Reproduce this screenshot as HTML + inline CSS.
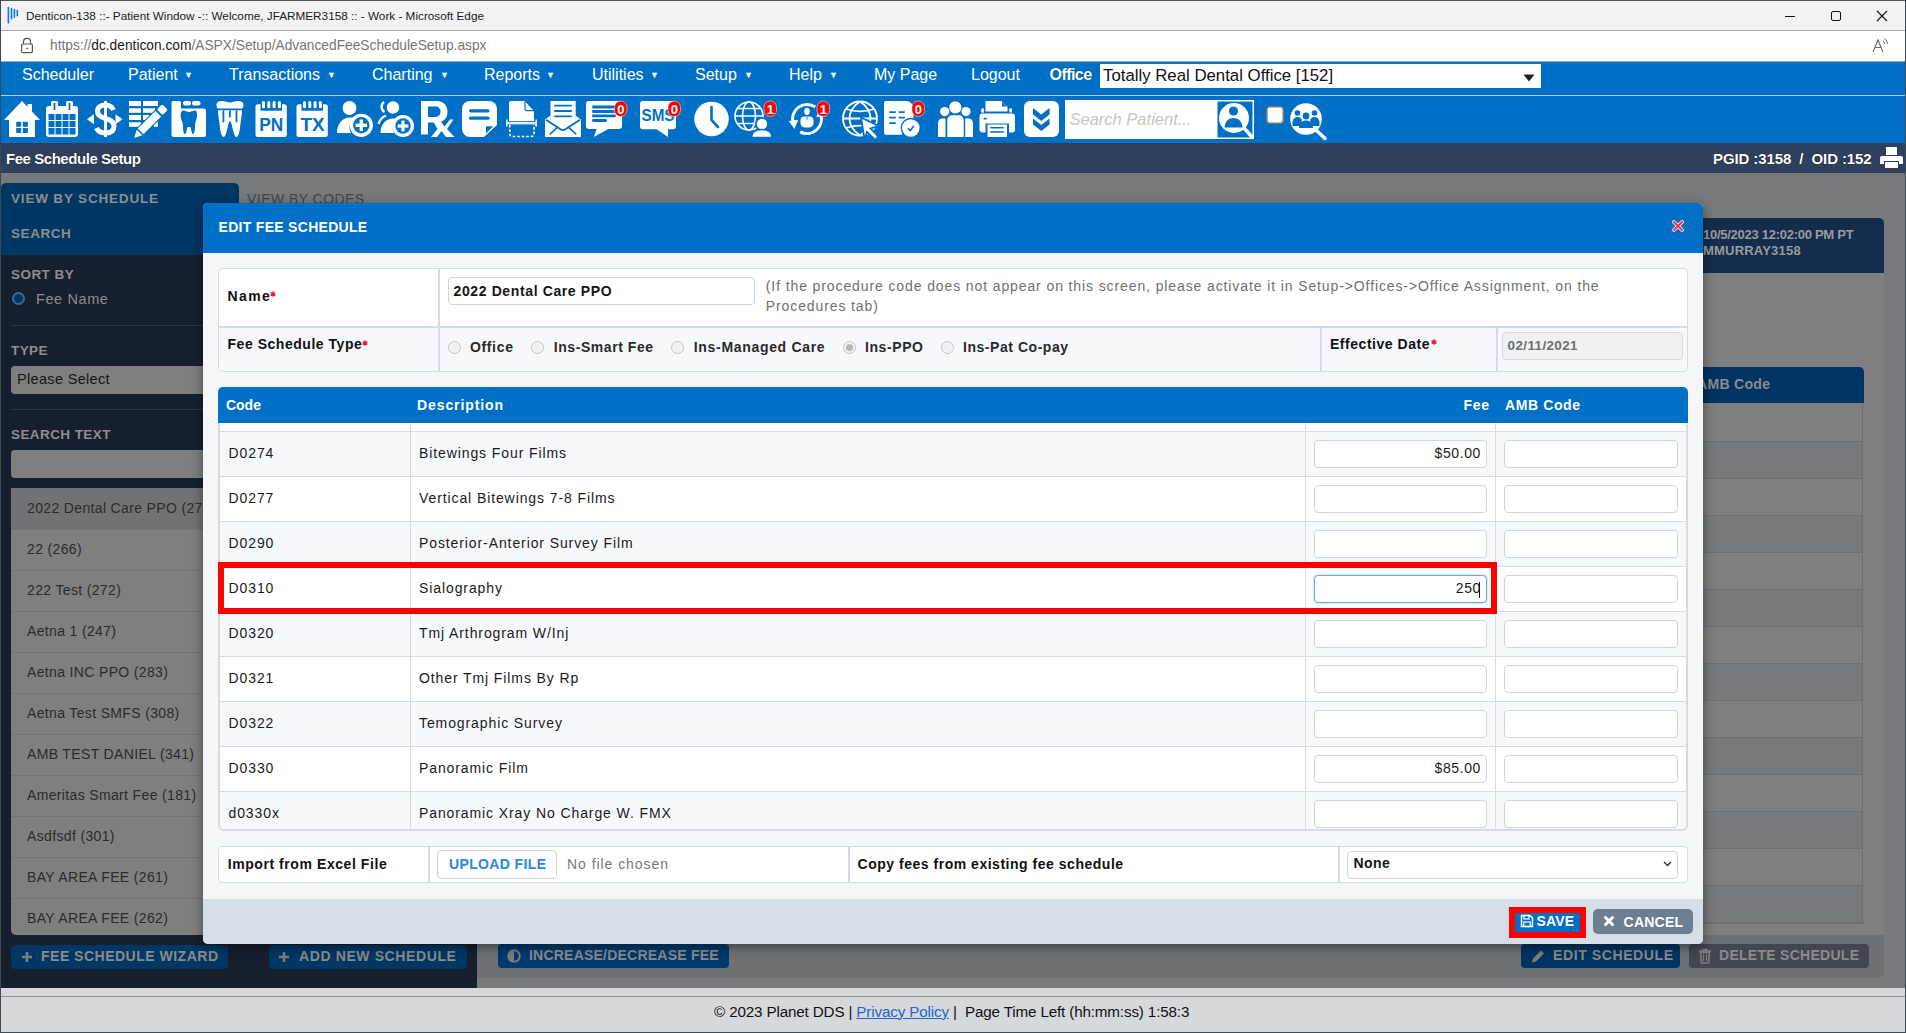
<!DOCTYPE html>
<html><head><meta charset="utf-8">
<style>
*{box-sizing:border-box;margin:0;padding:0}
html,body{width:1906px;height:1033px;overflow:hidden;background:#fff;font-family:"Liberation Sans",sans-serif}
.a{position:absolute}
.t{position:absolute;white-space:nowrap;line-height:1}
/* chrome */
#title{left:0;top:0;width:1906px;height:31px;background:#f3f3f3;border-top:1px solid #555;border-bottom:1px solid #a9a9a9}
#addr{left:0;top:31px;width:1906px;height:31px;background:#fff;border-bottom:1px solid #a9a9a9}
#nav{left:0;top:62px;width:1906px;height:34px;background:#0070c6;border-bottom:1px solid #b9cfe6}
.nv{color:#fff;font-size:16px;top:67px}
.car{font-size:9px;top:71px;color:#fff}
#tool{left:0;top:96px;width:1906px;height:47px;background:#0070c6}
#hdr{left:0;top:143px;width:1906px;height:30px;background:#2e405d}
/* content */
#bg{left:0;top:173px;width:1906px;height:815px;background:#777a7c}
#lp{left:0;top:255px;width:477px;height:733px;background:#161f2d}
#foot{left:0;top:988px;width:1906px;height:45px;background:#d6d9dc}
#wl{left:0;top:0;width:1px;height:1033px;background:#3b4956}
#wr{left:1905px;top:0;width:1px;height:1033px;background:#3d4b59}
#wb{left:0;top:1032px;width:1906px;height:1px;background:#3d4b59}
/* modal */
#modal{left:203px;top:203px;width:1500px;height:741px;background:#f4f6f9;border-radius:5px;overflow:hidden;box-shadow:0 0 10px rgba(0,0,0,.35)}
#mh{left:0;top:0;width:1500px;height:50px;background:#0070c6}
#mf{left:0;top:696px;width:1500px;height:45px;background:#d7dfe7}
</style></head><body>
<div id="title" class="a"></div>
<div id="addr" class="a"></div>
<div id="nav" class="a"></div>
<div id="tool" class="a"></div>
<div id="hdr" class="a"></div>
<div id="bg" class="a"></div>
<div id="lp" class="a"></div>
<div id="foot" class="a"></div>


<!-- title bar content -->
<svg class="a" style="left:6px;top:6px" width="14" height="18" viewBox="0 0 14 18"><g stroke="#0a78f0" stroke-width="1.6" stroke-linecap="round"><path d="M2.4 1.5V16.7M5.5 2.6V12.7M8.4 3.6V11.3M11.3 4.6V9.7"/></g></svg>
<div class="t" style="left:26px;top:9.8px;font-size:11.75px;color:#1a1a1a">Denticon-138 ::- Patient Window -:: Welcome, JFARMER3158 :: - Work - Microsoft Edge</div>
<div class="a" style="left:1785px;top:16px;width:10px;height:1px;background:#111"></div>
<div class="a" style="left:1831px;top:11px;width:10px;height:10px;border:1px solid #111;border-radius:2px"></div>
<svg class="a" style="left:1876px;top:10px" width="12" height="12" viewBox="0 0 12 12"><path d="M1 1L11 11M11 1L1 11" stroke="#111" stroke-width="1.1"/></svg>
<!-- address -->
<svg class="a" style="left:20px;top:37px" width="14" height="17" viewBox="0 0 14 17"><path d="M3.5 7V4.8a3.5 3.5 0 0 1 7 0V7" fill="none" stroke="#555" stroke-width="1.2"/><rect x="1.6" y="7" width="10.8" height="8.6" rx="1.2" fill="none" stroke="#555" stroke-width="1.2"/><circle cx="7" cy="11.3" r="0.9" fill="#555"/></svg>
<div class="t" style="left:50px;top:39px;font-size:13.75px;color:#767676">https://<span style="color:#1a1a1a">dc.denticon.com</span>/ASPX/Setup/AdvancedFeeScheduleSetup.aspx</div>
<svg class="a" style="left:1872px;top:37px" width="18" height="17" viewBox="0 0 18 17"><path d="M1 15L6 3L11 15M3 10.5H9" fill="none" stroke="#666" stroke-width="1.1"/><path d="M11 4a4 4 0 0 1 2 3.5M12.5 1.5a6.5 6.5 0 0 1 3 5.5" fill="none" stroke="#666" stroke-width="1"/></svg>
<!-- nav -->
<div class="t nv" style="left:22px">Scheduler</div>
<div class="t nv" style="left:128px">Patient</div><div class="t car" style="left:184px">&#9660;</div>
<div class="t nv" style="left:229px">Transactions</div><div class="t car" style="left:327px">&#9660;</div>
<div class="t nv" style="left:372px">Charting</div><div class="t car" style="left:440px">&#9660;</div>
<div class="t nv" style="left:484px">Reports</div><div class="t car" style="left:546px">&#9660;</div>
<div class="t nv" style="left:592px">Utilities</div><div class="t car" style="left:650px">&#9660;</div>
<div class="t nv" style="left:695px">Setup</div><div class="t car" style="left:744px">&#9660;</div>
<div class="t nv" style="left:789px">Help</div><div class="t car" style="left:829px">&#9660;</div>
<div class="t nv" style="left:874px">My Page</div>
<div class="t nv" style="left:971px">Logout</div>
<div class="t nv" style="left:1049.5px;font-weight:bold;font-size:16px;top:66.5px;letter-spacing:-0.55px;text-shadow:0 0 1px #003a70">Office</div>
<div class="a" style="left:1100px;top:64px;width:441px;height:24px;background:#fff"></div>
<div class="t" style="left:1103px;top:68px;font-size:16.8px;color:#111">Totally Real Dental Office [152]</div>
<svg class="a" style="left:1523px;top:74px" width="12" height="8" viewBox="0 0 12 8"><path d="M0.5 0.5H11.5L6 7.5Z" fill="#222"/></svg>

<svg class="a" style="left:0;top:96px" width="1340" height="47" viewBox="0 96 1340 47">
<g fill="#fff">
<!-- home -->
<path d="M22 101L4 120H9V137H35V120H40L32 111.5V104H27.5V107Z"/>
<g fill="#0070c6"><rect x="16.2" y="121.8" width="5" height="5"/><rect x="22.8" y="121.8" width="5" height="5"/><rect x="16.2" y="128" width="5" height="5"/><rect x="22.8" y="128" width="5" height="5"/></g>
<!-- calendar -->
<rect x="46" y="106" width="32" height="31" rx="3"/>
<rect x="51" y="101" width="7" height="10" rx="1.5"/><rect x="66" y="101" width="7" height="10" rx="1.5"/>
<g fill="#0070c6"><rect x="53.6" y="103" width="1.8" height="7"/><rect x="68.6" y="103" width="1.8" height="7"/>
<rect x="48.5" y="114" width="6" height="6"/><rect x="55.5" y="114" width="6" height="6"/><rect x="62.5" y="114" width="6" height="6"/><rect x="69.5" y="114" width="6" height="6"/>
<rect x="48.5" y="121" width="6" height="6"/><rect x="55.5" y="121" width="6" height="6"/><rect x="62.5" y="121" width="6" height="6"/><rect x="69.5" y="121" width="6" height="6"/>
<rect x="48.5" y="128" width="6" height="6.5"/><rect x="55.5" y="128" width="6" height="6.5"/><rect x="62.5" y="128" width="6" height="6.5"/><rect x="69.5" y="128" width="6" height="6.5"/></g>
<!-- dollar -->
<path d="M113.5 110C112 106.5 109 105 105.5 105C100.5 105 97.5 107.5 97.5 111.5C97.5 116 102 117.5 105.5 118.5C109.5 119.7 114 121 114 126.5C114 131 110.5 133 105.5 133C101 133 98 131.5 96.5 128" fill="none" stroke="#fff" stroke-width="5"/>
<rect x="104" y="101" width="3" height="36"/>
<path d="M87 119.3L94 114.3V124.3Z"/><path d="M122.5 119.3L115.5 114.3V124.3Z"/>
<!-- list pencil -->
<rect x="129" y="101" width="12" height="5"/><rect x="129" y="108.3" width="12" height="4.5"/><rect x="129" y="115" width="12" height="5"/><rect x="129" y="122.3" width="12" height="4.5"/>
<rect x="143" y="101" width="15" height="5"/><rect x="143" y="108.3" width="12" height="4.5"/><rect x="143" y="115" width="6" height="5"/><rect x="154" y="122.3" width="4" height="4.5"/>
<g transform="translate(150.5,121.5) rotate(-45)"><rect x="-15" y="-5" width="27" height="10" fill="#0070c6"/><rect x="-14" y="-4" width="25" height="8"/><rect x="13" y="-4" width="7.5" height="8" rx="1.5"/><path d="M-15.5 -4L-23 0L-15.5 4Z"/></g>
<!-- tooth card -->
<path d="M171.5 103A2 2 0 0 1 173.5 101H179A2 2 0 0 1 181 103V108.5H203.5A2.5 2.5 0 0 1 206 111V134.5A2.5 2.5 0 0 1 203.5 137H174A2.5 2.5 0 0 1 171.5 134.5Z"/>
<rect x="183" y="101" width="8" height="4.5" rx="2"/><rect x="192" y="101" width="8.5" height="4.5" rx="2"/>
<path fill="#0070c6" d="M183 110.5C185 110.5 187 112 189 112C191 112 193 110.5 195 110.5C197 111 197.5 114 197 117C196.5 120 195 122 195 126C195 130 194.5 134 193 134C191.5 134 191.5 130 190.5 127H187.5C186.5 130 186.5 134 185 134C183.5 134 183 130 183 126C183 122 181 120 180.7 117C180.5 114 181 110.8 183 110.5Z"/>
<!-- crown tooth -->
<path d="M216.5 105C216.5 102 219 101 222 101C226 101 227.5 102.5 230 102.5C232.5 102.5 234 101 238 101C241 101 243.5 102 243.5 105C243.5 107 242.5 108.6 242 108.6H218C217.5 108.6 216.5 107 216.5 105Z"/>
<path d="M218 110.3H242C242 116 240.5 122 240 128C239.5 133 238 137 236.5 137C234.5 137 233.5 132 232.5 128C231.5 123 230.5 121 230 121C229.5 121 228.5 123 227.5 128C226.5 132 225.5 137 223.5 137C222 137 220.5 133 220 128C219.5 122 218 116 218 110.3Z"/>
<g fill="#0070c6"><rect x="222.5" y="110.3" width="1.8" height="12"/><rect x="229" y="110.3" width="1.8" height="7"/><rect x="235.6" y="110.3" width="1.8" height="12"/></g>
<!-- PN / TX -->
<g id="pn"><rect x="255.5" y="104.2" width="31.3" height="32.8" rx="2.5"/><rect x="260.5" y="100" width="21.5" height="10.7" fill="#0070c6"/>
<rect x="262" y="101" width="3" height="7.2" rx="1.5"/><rect x="267.3" y="101" width="3" height="7.2" rx="1.5"/><rect x="272.6" y="101" width="3" height="7.2" rx="1.5"/><rect x="277.9" y="101" width="3" height="7.2" rx="1.5"/></g>
<text x="259.3" y="131" font-family="Liberation Sans" font-weight="bold" font-size="17.5" fill="#0070c6" textLength="24" lengthAdjust="spacingAndGlyphs">PN</text>
<use href="#pn" x="41"/>
<text x="300.5" y="131" font-family="Liberation Sans" font-weight="bold" font-size="17.5" fill="#0070c6" textLength="24" lengthAdjust="spacingAndGlyphs">TX</text>
<!-- person add -->
<circle cx="349.5" cy="108" r="6.9"/>
<path d="M337 133C337 124 342 117.5 350 117.5H353.5C351 120 349.5 123.5 349.5 127.5C349.5 129.5 350 131.5 351 133Z"/>
<circle cx="361.3" cy="125.3" r="11.6"/><circle cx="361.3" cy="125.3" r="8.2" fill="#0070c6"/>
<rect x="359.6" y="119.5" width="3.4" height="11.6"/><rect x="355.5" y="123.6" width="11.6" height="3.4"/>
<!-- persons add -->
<circle cx="393" cy="107.5" r="6.2"/>
<path d="M384 102A6 6 0 0 0 384.5 112" fill="none" stroke="#fff" stroke-width="2.3"/>
<path d="M386 115.5A13 13 0 0 0 378.5 124" fill="none" stroke="#fff" stroke-width="2.3"/>
<path d="M380.5 133C380.5 125 385.5 118.5 393 118.5H396C394 121 392.5 124 392.5 128C392.5 129.8 393 131.5 394 133Z"/>
<circle cx="403" cy="126" r="11"/><circle cx="403" cy="126" r="7.7" fill="#0070c6"/>
<rect x="401.4" y="120.6" width="3.2" height="10.8"/><rect x="397.6" y="124.4" width="10.8" height="3.2"/>
<!-- Rx -->
<path fill-rule="evenodd" d="M421 101H436.5C443.5 101 447.5 105.5 447.5 112C447.5 117 445 120.5 440.5 121.8L443 125.5L439.5 130L434 122.5H428V134.5H421ZM428 106.5V117H435.5C438.5 117 440.5 115 440.5 111.8C440.5 108.5 438.5 106.5 435.5 106.5Z"/>
<path d="M432 119.5H439.5L444.5 126.5L450 119.5H453.5L447 129L454.5 137H446L441.5 131L437 137H431L437.5 129Z"/>
<!-- note -->
<path d="M470 101H489A8 8 0 0 1 497 109V125L484 137H470A8 8 0 0 1 462 129V109A8 8 0 0 1 470 101Z"/>
<path fill="#0070c6" d="M486 126.3H493.3L486 133.5Z"/>
<g fill="#0070c6"><rect x="469" y="109.3" width="20.5" height="3.1" rx="1.55"/><rect x="469" y="116.6" width="20.5" height="3.1" rx="1.55"/></g>
<!-- scanner -->
<path d="M511 101H524.5L534 111V121H509V103Q509 101 511 101Z"/>
<path d="M525 101.2V108.6Q525 110.6 527 110.6H534" fill="none" stroke="#0070c6" stroke-width="1.2"/>
<rect x="506" y="121.8" width="31" height="2.6" fill="#e3f0fb"/><rect x="506" y="119.5" width="1.6" height="7.2" fill="#e3f0fb"/><rect x="535.4" y="119.5" width="1.6" height="7.2" fill="#e3f0fb"/>
<path d="M509.8 124.8V133.8Q509.8 136.5 512.5 136.5H531.3Q534 136.5 534 133.8V124.8" fill="none" stroke="#fff" stroke-width="1.6" stroke-dasharray="2.6 1.9"/>
<!-- envelope -->
<path d="M545 119.5L550.5 115.5V121H575.5V115.5L581 119.5V137H545Z"/>
<rect x="550.5" y="101" width="25.2" height="24"/>
<g fill="#0070c6"><rect x="554" y="104.7" width="18" height="1.8" rx="0.9"/><rect x="554" y="110.1" width="18" height="1.8" rx="0.9"/><rect x="554" y="115.4" width="18" height="1.8" rx="0.9"/></g>
<path d="M546 119.8L560.5 129.3Q563 131 565.5 129.3L580 119.8" fill="none" stroke="#0070c6" stroke-width="1.8"/>
<path d="M550.2 134L557.5 127.2M575.8 134L568.5 127.2" stroke="#0070c6" stroke-width="1.7" stroke-linecap="round"/>
<!-- chat -->
<path d="M589 101H619A3 3 0 0 1 622 104V126A3 3 0 0 1 619 129H608.3L593.8 137L596.7 129H589A3 3 0 0 1 586 126V104A3 3 0 0 1 589 101Z"/>
<g fill="#0070c6"><rect x="592" y="105.6" width="24" height="2.8" rx="1.4"/><rect x="592" y="110.1" width="24" height="2.8" rx="1.4"/><rect x="592" y="114.5" width="24" height="2.8" rx="1.4"/><rect x="592" y="119.1" width="15" height="2.8" rx="1.4"/></g>
<!-- sms -->
<path d="M643 101H673A3 3 0 0 1 676 104V126.2A3 3 0 0 1 673 129.2H668V137L656.7 129.2H643A3 3 0 0 1 640 126.2V104A3 3 0 0 1 643 101Z"/>
<text x="641.5" y="121.1" font-family="Liberation Sans" font-weight="bold" font-size="16" fill="#0070c6" textLength="33" lengthAdjust="spacingAndGlyphs">SMS</text>
<!-- clock -->
<circle cx="711.5" cy="119" r="17.3"/>
<path d="M711.5 107V120L718 127" fill="none" stroke="#0070c6" stroke-width="2.6" stroke-linecap="round"/>
<!-- globe person -->
<g fill="none" stroke="#fff" stroke-width="1.6"><circle cx="749" cy="116" r="14"/><ellipse cx="749" cy="116" rx="6.5" ry="14"/><path d="M735 116H763M737 108.5H761M737 123.5H761"/></g>
<circle cx="762" cy="124" r="7" fill="#0070c6"/><circle cx="762" cy="124" r="5.2"/>
<path d="M751.5 137.5C751.5 132 756 129.5 762 129.5C768 129.5 772 132 772 137.5Z" stroke="#0070c6" stroke-width="1.5"/>
<!-- refresh person -->
<path d="M815.3 107.1A14.5 14.5 0 0 0 793 122.75" fill="none" stroke="#fff" stroke-width="3"/>
<path d="M788.8 121L798.3 119.8L794.3 129Z"/>
<path d="M800.2 131.8A14.5 14.5 0 0 0 821 115.25" fill="none" stroke="#fff" stroke-width="3"/>
<path d="M816.3 117L820.5 108.3L825.5 116.5Z"/>
<ellipse cx="807" cy="111.3" rx="2.8" ry="3.6"/>
<path d="M800.5 120.5A4 4 0 0 1 804.5 116.5H809.5A4 4 0 0 1 813.5 120.5V123A4.5 4.5 0 0 1 809 127.5H805A4.5 4.5 0 0 1 800.5 123Z"/>
<path d="M806 116.5L807 119.5L808 116.5" fill="none" stroke="#0070c6" stroke-width="0.6"/>
<!-- globe cursor -->
<g fill="none" stroke="#fff" stroke-width="1.8"><circle cx="860" cy="118.5" r="17"/><path d="M860 101.5C852 107 849.5 113 849.5 118.5C849.5 124 852 130 860 135.5M860 101.5C868 107 870.5 113 870.5 118.5C870.5 124 868 130 860 135.5"/>
<path d="M846 109C855 112 865 112 874 109M843 118.5H877M846 128C855 125 865 125 874 128"/></g>
<path d="M861 117.5L878.5 126L870.5 128.5L878.5 136.5L875 140L867 132L864.5 139.5Z" stroke="#0070c6" stroke-width="1.8"/>
<!-- doc check -->
<path d="M886 101H906A7.5 7.5 0 0 1 913.5 108.5V127H902V134.8H886A2 2 0 0 1 884 132.8V103A2 2 0 0 1 886 101Z"/>
<g fill="#0070c6"><rect x="889" y="111.2" width="7" height="1.7" rx="0.8"/><rect x="898.5" y="111.2" width="6.5" height="1.7" rx="0.8"/><rect x="889" y="116.8" width="7" height="1.7" rx="0.8"/><rect x="898.5" y="116.8" width="6.5" height="1.7" rx="0.8"/><rect x="889" y="122.3" width="7" height="1.7" rx="0.8"/></g>
<circle cx="910.8" cy="128" r="10.2" fill="#0070c6"/><circle cx="910.8" cy="128" r="8.8"/>
<path d="M908 128.3L910.3 130.5L913.8 126" fill="none" stroke="#0070c6" stroke-width="1.6"/>
<!-- people -->
<circle cx="955.3" cy="107.4" r="6.1"/><circle cx="944.7" cy="111.6" r="4.6"/><circle cx="966" cy="111.6" r="4.6"/>
<path d="M938 137V123A4.5 4.5 0 0 1 942.5 118.5H945.5V137Z"/><path d="M965.2 137V118.5H968.5A4.5 4.5 0 0 1 973 123V137Z"/>
<path d="M947.3 137V120A4.7 4.7 0 0 1 952 115.3H959A4.7 4.7 0 0 1 963.7 120V137Z"/>
<!-- printer -->
<path d="M985.5 101H1001.5L1007.5 107V111.5H985.5Z"/><path fill="#0070c6" d="M1002 101.8V106.6H1006.8Z"/>
<path d="M981.5 108.5H984V112.5H981Z"/><path d="M1009 108.5H1012V112.5H1009.5Z"/>
<path d="M982.5 113.5H1012A3 3 0 0 1 1015 116.5V129.5A3 3 0 0 1 1012 132.5H1009V123.5H985.5V132.5H982.5A3 3 0 0 1 979.5 129.5V116.5A3 3 0 0 1 982.5 113.5Z"/>
<rect x="987.5" y="124.5" width="19.5" height="12.5"/>
<g fill="#0070c6"><rect x="990" y="127" width="14" height="1.6" rx="0.8"/><rect x="990" y="131.2" width="14" height="1.6" rx="0.8"/><rect x="983.5" y="117.8" width="3.5" height="1.6" rx="0.8"/></g>
<!-- chevron box -->
<rect x="1024" y="101" width="35" height="36" rx="6"/>
<path d="M1033 108L1041.3 114.5L1049.5 108V114.5L1041.3 121L1033 114.5Z M1033 118.5L1041.3 125L1049.5 118.5V124.5L1041.3 131L1033 124.5Z" fill="#0070c6"/>
<!-- search -->
<rect x="1065" y="100" width="189" height="39"/>
<rect x="1217" y="101" width="36" height="37" fill="#0070c6" stroke="#fff" stroke-width="1"/>
<circle cx="1234" cy="118" r="15"/>
<path d="M1244 128L1252 137" stroke="#fff" stroke-width="3.5" stroke-linecap="round"/>
<circle cx="1233.5" cy="111" r="4.6" fill="#0070c6"/><path d="M1224.5 127.5C1225 121 1229 118 1233.5 118C1238 118 1242 121 1242.5 127.5Z" fill="#0070c6"/>
<text x="1069.5" y="125" font-family="Liberation Sans" font-style="italic" font-size="16.5" fill="#c9c5c0">Search Patient...</text>
<!-- checkbox -->
<rect x="1266.8" y="106.8" width="16.5" height="16.5" rx="3" stroke="#7a7a7a" stroke-width="1.6"/>
<!-- group search -->
<circle cx="1306" cy="119" r="15.8"/>
<path d="M1316 130L1325 138.5" stroke="#fff" stroke-width="3.5" stroke-linecap="round"/>
<g fill="#0070c6"><circle cx="1297.5" cy="113" r="2.8"/><circle cx="1314.5" cy="113" r="2.8"/><circle cx="1306" cy="116" r="3.4"/>
<path d="M1292.5 123C1292.5 119 1295 117 1297.5 117C1300 117 1301.5 118.5 1302 120L1300 126H1292.5Z"/><path d="M1319.5 123C1319.5 119 1317 117 1314.5 117C1312 117 1310.5 118.5 1310 120L1312 126H1319.5Z"/>
<path d="M1299 128C1299 123 1302 120.5 1306 120.5C1310 120.5 1313 123 1313 128Z"/></g>
</g>
<!-- badges -->
<g font-family="Liberation Sans" font-weight="bold" font-size="13" fill="#fff" text-anchor="middle">
<rect x="614.5" y="101" width="12.5" height="15.5" rx="6.2" fill="#f00" stroke="#fff" stroke-opacity="0.6" stroke-width="0.8"/><text x="620.8" y="113.5">0</text>
<rect x="668" y="101" width="12.5" height="15.5" rx="6.2" fill="#f00" stroke="#fff" stroke-opacity="0.6" stroke-width="0.8"/><text x="674.3" y="113.5">0</text>
<rect x="764" y="101" width="12.5" height="15.5" rx="6.2" fill="#f00" stroke="#fff" stroke-opacity="0.6" stroke-width="0.8"/><text x="770.3" y="113.5">1</text>
<rect x="817" y="101" width="12.5" height="15.5" rx="6.2" fill="#f00" stroke="#fff" stroke-opacity="0.6" stroke-width="0.8"/><text x="823.3" y="113.5">1</text>
<rect x="912" y="101" width="12.5" height="15.5" rx="6.2" fill="#f00" stroke="#fff" stroke-opacity="0.6" stroke-width="0.8"/><text x="918.3" y="113.5">0</text>
</g>
</svg>


<!-- left panel -->
<div class="a" style="left:1px;top:183px;width:238px;height:72px;background:#003764;border-radius:5px 5px 0 0"></div>
<div class="a" style="left:1px;top:219px;width:476px;height:36px;background:#003764"></div>
<div class="t" style="left:11px;top:192px;font-size:13.5px;font-weight:bold;color:#8e8e8e;letter-spacing:0.82px">VIEW BY SCHEDULE</div>
<div class="t" style="left:247px;top:192px;font-size:14px;color:#454545;letter-spacing:0.45px">VIEW BY CODES</div>
<div class="t" style="left:11px;top:227px;font-size:13.5px;font-weight:bold;color:#8e8e8e;letter-spacing:0.56px">SEARCH</div>
<div class="t" style="left:11px;top:268px;font-size:13.5px;font-weight:bold;color:#8e8e8e;letter-spacing:0.45px">SORT BY</div>
<div class="a" style="left:12px;top:292px;width:13px;height:13px;border-radius:50%;background:#003764;border:2px solid #3e6a92"></div>
<div class="t" style="left:36px;top:292px;font-size:14.5px;color:#8c8c8c;letter-spacing:0.60px">Fee Name</div>
<div class="a" style="left:11px;top:325px;width:466px;height:1px;background:#2f3744"></div>
<div class="t" style="left:11px;top:344px;font-size:13.5px;font-weight:bold;color:#8e8e8e;letter-spacing:0.42px">TYPE</div>
<div class="a" style="left:11px;top:366px;width:300px;height:28px;background:#7f7f7f;border-radius:4px"></div>
<div class="t" style="left:17px;top:372px;font-size:14.5px;color:#151515;letter-spacing:0.33px">Please Select</div>
<div class="a" style="left:11px;top:409px;width:466px;height:1px;background:#2f3744"></div>
<div class="t" style="left:11px;top:428px;font-size:13.5px;font-weight:bold;color:#8e8e8e;letter-spacing:0.42px">SEARCH TEXT</div>
<div class="a" style="left:11px;top:450px;width:300px;height:28px;background:#7f7f7f;border-radius:4px"></div>
<div class="a" style="left:11px;top:488px;width:300px;height:447px;border-radius:4px;overflow:hidden">
</div>
<div class="a" style="left:11px;top:488px;width:200px;height:42px;background:#6f7378;border-bottom:1px solid #737373;"></div>
<div class="a" style="left:11px;top:530px;width:200px;height:41px;background:#7f7f7f;border-bottom:1px solid #737373;"></div>
<div class="a" style="left:11px;top:571px;width:200px;height:41px;background:#7f7f7f;border-bottom:1px solid #737373;"></div>
<div class="a" style="left:11px;top:612px;width:200px;height:41px;background:#7f7f7f;border-bottom:1px solid #737373;"></div>
<div class="a" style="left:11px;top:653px;width:200px;height:41px;background:#7f7f7f;border-bottom:1px solid #737373;"></div>
<div class="a" style="left:11px;top:694px;width:200px;height:41px;background:#7f7f7f;border-bottom:1px solid #737373;"></div>
<div class="a" style="left:11px;top:735px;width:200px;height:41px;background:#7f7f7f;border-bottom:1px solid #737373;"></div>
<div class="a" style="left:11px;top:776px;width:200px;height:41px;background:#7f7f7f;border-bottom:1px solid #737373;"></div>
<div class="a" style="left:11px;top:817px;width:200px;height:41px;background:#7f7f7f;border-bottom:1px solid #737373;"></div>
<div class="a" style="left:11px;top:858px;width:200px;height:41px;background:#7f7f7f;border-bottom:1px solid #737373;"></div>
<div class="a" style="left:11px;top:899px;width:200px;height:36px;background:#7f7f7f;border-radius:0 0 5px 5px;"></div>
<div class="t" style="left:27px;top:501px;font-size:14px;letter-spacing:0.35px;color:#2b2b2b">2022 Dental Care PPO (272)</div>
<div class="t" style="left:27px;top:542px;font-size:14px;letter-spacing:0.35px;color:#2b2b2b">22 (266)</div>
<div class="t" style="left:27px;top:583px;font-size:14px;letter-spacing:0.35px;color:#2b2b2b">222 Test (272)</div>
<div class="t" style="left:27px;top:624px;font-size:14px;letter-spacing:0.35px;color:#2b2b2b">Aetna 1 (247)</div>
<div class="t" style="left:27px;top:665px;font-size:14px;letter-spacing:0.35px;color:#2b2b2b">Aetna INC PPO (283)</div>
<div class="t" style="left:27px;top:706px;font-size:14px;letter-spacing:0.35px;color:#2b2b2b">Aetna Test SMFS (308)</div>
<div class="t" style="left:27px;top:747px;font-size:14px;letter-spacing:0.35px;color:#2b2b2b">AMB TEST DANIEL (341)</div>
<div class="t" style="left:27px;top:788px;font-size:14px;letter-spacing:0.35px;color:#2b2b2b">Ameritas Smart Fee (181)</div>
<div class="t" style="left:27px;top:829px;font-size:14px;letter-spacing:0.35px;color:#2b2b2b">Asdfsdf (301)</div>
<div class="t" style="left:27px;top:870px;font-size:14px;letter-spacing:0.35px;color:#2b2b2b">BAY AREA FEE (261)</div>
<div class="t" style="left:27px;top:911px;font-size:14px;letter-spacing:0.35px;color:#2b2b2b">BAY AREA FEE (262)</div>


<!-- header bar -->
<div class="t" style="left:6px;top:151px;font-size:15px;font-weight:bold;color:#fff;letter-spacing:-0.45px;text-shadow:0 0 1px #000">Fee Schedule Setup</div>
<div class="t" style="left:1713px;top:151px;font-size:15px;font-weight:bold;color:#fff;letter-spacing:-0.1px;text-shadow:0 0 1px #000">PGID :3158&nbsp;&nbsp;/&nbsp;&nbsp;OID :152</div>
<svg class="a" style="left:1880px;top:147px" width="23" height="22" viewBox="0 0 23 22"><rect x="6" y="0" width="11" height="8" fill="#fff"/><path d="M2 9H21a2 2 0 0 1 2 2V17H19V14H4V17H0V11A2 2 0 0 1 2 9Z" fill="#fff"/><rect x="5" y="15" width="13" height="6" fill="#fff"/></svg>

<!--BG-->
<div class="a" style="left:487px;top:218px;width:1397px;height:717px;background:#7f7f7f;border-radius:5px 5px 0 0"></div>
<div class="a" style="left:487px;top:218px;width:1397px;height:55px;background:#142d4c;border-radius:5px 5px 0 0"></div>
<div class="t" style="left:1703.0px;top:227.5px;font-size:13px;font-weight:bold;color:#9b9b9b;letter-spacing:-0.27px;">10/5/2023 12:02:00 PM PT</div>
<div class="t" style="left:1703.0px;top:244.0px;font-size:13px;font-weight:bold;color:#9b9b9b;letter-spacing:0.00px;letter-spacing:0.2px">MMURRAY3158</div>
<div class="a" style="left:497px;top:367px;width:1367px;height:36px;background:#003463;border-radius:5px 5px 0 0"></div>
<div class="t" style="left:1697.0px;top:377.1px;font-size:14px;font-weight:bold;color:#8c8c8c;letter-spacing:0.32px;">AMB Code</div>
<div class="a" style="left:497px;top:403.00px;width:1366px;height:38.40px;background:#7f7f7f"></div>
<div class="a" style="left:497px;top:441.40px;width:1366px;height:37.03px;background:#767a7d"></div>
<div class="a" style="left:497px;top:478.43px;width:1366px;height:37.03px;background:#7f7f7f"></div>
<div class="a" style="left:497px;top:515.46px;width:1366px;height:37.03px;background:#767a7d"></div>
<div class="a" style="left:497px;top:552.49px;width:1366px;height:37.03px;background:#7f7f7f"></div>
<div class="a" style="left:497px;top:589.52px;width:1366px;height:37.03px;background:#767a7d"></div>
<div class="a" style="left:497px;top:626.55px;width:1366px;height:37.03px;background:#7f7f7f"></div>
<div class="a" style="left:497px;top:663.58px;width:1366px;height:37.03px;background:#767a7d"></div>
<div class="a" style="left:497px;top:700.61px;width:1366px;height:37.03px;background:#7f7f7f"></div>
<div class="a" style="left:497px;top:737.64px;width:1366px;height:37.03px;background:#767a7d"></div>
<div class="a" style="left:497px;top:774.67px;width:1366px;height:37.03px;background:#7f7f7f"></div>
<div class="a" style="left:497px;top:811.70px;width:1366px;height:37.03px;background:#767a7d"></div>
<div class="a" style="left:497px;top:848.73px;width:1366px;height:37.03px;background:#7f7f7f"></div>
<div class="a" style="left:497px;top:885.76px;width:1366px;height:37.24px;background:#767a7d"></div>
<div class="a" style="left:497px;top:440.90px;width:1366px;height:1px;background:#6c7074"></div>
<div class="a" style="left:497px;top:477.93px;width:1366px;height:1px;background:#6c7074"></div>
<div class="a" style="left:497px;top:514.96px;width:1366px;height:1px;background:#6c7074"></div>
<div class="a" style="left:497px;top:551.99px;width:1366px;height:1px;background:#6c7074"></div>
<div class="a" style="left:497px;top:589.02px;width:1366px;height:1px;background:#6c7074"></div>
<div class="a" style="left:497px;top:626.05px;width:1366px;height:1px;background:#6c7074"></div>
<div class="a" style="left:497px;top:663.08px;width:1366px;height:1px;background:#6c7074"></div>
<div class="a" style="left:497px;top:700.11px;width:1366px;height:1px;background:#6c7074"></div>
<div class="a" style="left:497px;top:737.14px;width:1366px;height:1px;background:#6c7074"></div>
<div class="a" style="left:497px;top:774.17px;width:1366px;height:1px;background:#6c7074"></div>
<div class="a" style="left:497px;top:811.20px;width:1366px;height:1px;background:#6c7074"></div>
<div class="a" style="left:497px;top:848.23px;width:1366px;height:1px;background:#6c7074"></div>
<div class="a" style="left:497px;top:885.26px;width:1366px;height:1px;background:#6c7074"></div>
<div class="a" style="left:1862px;top:403px;width:1px;height:521px;background:#6c7074"></div>
<div class="a" style="left:497px;top:922px;width:1367px;height:2px;background:#6c7074;border-radius:0 0 5px 5px"></div>
<div class="a" style="left:477px;top:935px;width:1407px;height:43px;background:#6d7175;border-radius:0 0 5px 0"></div>
<div class="a" style="left:1521px;top:944px;width:159px;height:24px;background:#003462;border-radius:4px"></div>
<svg class="a" style="left:1530px;top:948px" width="16" height="16" viewBox="0 0 16 16"><path d="M2 14.5L3 10.5L11 2.5L14 5.5L6 13.5Z" fill="#7d7d7d"/></svg>
<div class="t" style="left:1553.0px;top:948.3px;font-size:14px;font-weight:bold;color:#8b8b8b;letter-spacing:0.60px;">EDIT SCHEDULE</div>
<div class="a" style="left:1689px;top:944px;width:180px;height:24px;background:#41474f;border-radius:4px"></div>
<svg class="a" style="left:1698px;top:948px" width="14" height="16" viewBox="0 0 14 16"><path d="M1 3H13M5 3V1.5H9V3M2.5 4.5H11.5L10.5 15H3.5Z" fill="none" stroke="#7d7d7d" stroke-width="1.6"/><path d="M5.5 6.5V13M8.5 6.5V13" stroke="#7d7d7d" stroke-width="1.2"/></svg>
<div class="t" style="left:1719.0px;top:948.3px;font-size:14px;font-weight:bold;color:#8b8b8b;letter-spacing:0.28px;">DELETE SCHEDULE</div>
<div class="a" style="left:498px;top:944px;width:231px;height:24px;background:#003a6e;border-radius:4px"></div>
<svg class="a" style="left:507px;top:949px" width="14" height="14" viewBox="0 0 14 14"><circle cx="7" cy="7" r="5.8" fill="none" stroke="#7d7d7d" stroke-width="2"/><path d="M7 1.5A5.5 5.5 0 0 0 7 12.5Z" fill="#7d7d7d"/></svg>
<div class="t" style="left:529.0px;top:948.3px;font-size:14px;font-weight:bold;color:#8b8b8b;letter-spacing:0.22px;">INCREASE/DECREASE FEE</div>
<div class="a" style="left:11px;top:945px;width:217px;height:24px;background:#003764;border-radius:4px"></div>
<svg class="a" style="left:21px;top:951px" width="12" height="12" viewBox="0 0 12 12"><path d="M6 1V11M1 6H11" stroke="#7d7d7d" stroke-width="2.6"/></svg>
<div class="t" style="left:41.0px;top:949.3px;font-size:14px;font-weight:bold;color:#8b8b8b;letter-spacing:0.50px;">FEE SCHEDULE WIZARD</div>
<div class="a" style="left:269px;top:945px;width:198px;height:24px;background:#003764;border-radius:4px"></div>
<svg class="a" style="left:278px;top:951px" width="12" height="12" viewBox="0 0 12 12"><path d="M6 1V11M1 6H11" stroke="#7d7d7d" stroke-width="2.6"/></svg>
<div class="t" style="left:299.0px;top:949.3px;font-size:14px;font-weight:bold;color:#8b8b8b;letter-spacing:0.61px;">ADD NEW SCHEDULE</div>
<div class="a" style="left:0;top:996px;width:1906px;height:1px;background:#8f9194"></div>
<div class="t" style="left:714px;top:1003.5px;font-size:15.2px;color:#111;letter-spacing:-0.14px">&copy; 2023 Planet DDS | <span style="color:#2266cc;text-decoration:underline">Privacy Policy</span> |&nbsp; Page Time Left (hh:mm:ss) 1:58:3</div>
<!--/BG-->
<!--MODAL-->
<div class="a" style="left:203px;top:203px;width:1500px;height:741px;background:#f4f6f9;border-radius:5px;overflow:hidden;box-shadow:0 3px 12px rgba(0,0,0,.45)"><div class="a" style="left:0;top:0;width:1500px;height:50px;background:#0070c6"></div><div class="a" style="left:0;top:696px;width:1500px;height:45px;background:#d6dfe7"></div></div>
<div class="t" style="left:218.5px;top:220.1px;font-size:14px;font-weight:bold;color:#fff;letter-spacing:0.30px;">EDIT FEE SCHEDULE</div>
<svg class="a" style="left:1672px;top:220px" width="12" height="12" viewBox="0 0 12 12"><path d="M2 2L10 10M10 2L2 10" stroke="#fff" stroke-width="3.6" stroke-linecap="round"/><path d="M2 2L10 10M10 2L2 10" stroke="#e53a52" stroke-width="2.2" stroke-linecap="round"/></svg>
<div class="a" style="left:218px;top:268px;width:1470px;height:104px;border:1px solid #d3dce6;border-radius:5px;background:#fff;overflow:hidden"><div class="a" style="left:0;top:57px;width:1470px;height:47px;background:#f5f9fd;border-top:2px solid #d3dce6"></div><div class="a" style="left:219px;top:0;width:2px;height:104px;background:#d3dce6"></div><div class="a" style="left:1101px;top:57px;width:2px;height:47px;background:#d3dce6"></div><div class="a" style="left:1277px;top:57px;width:2px;height:47px;background:#d3dce6"></div></div>
<div class="t" style="left:227.5px;top:289.0px;font-size:14px;font-weight:bold;color:#111;letter-spacing:1.39px;">Name</div>
<svg class="a" style="left:270.3px;top:291.3px" width="6" height="6" viewBox="0 0 6 6"><path d="M3 0.3V5.7M0.6 1.6L5.4 4.4M5.4 1.6L0.6 4.4" stroke="#ee1c25" stroke-width="1.3"/></svg>
<div class="a" style="left:448px;top:277px;width:307px;height:28px;border:1px solid #cfd6e0;border-radius:4px;background:#fff"></div>
<div class="t" style="left:453.5px;top:283.5px;font-size:14px;font-weight:bold;color:#151515;letter-spacing:0.62px;">2022 Dental Care PPO</div>
<div class="t" style="left:765.8px;top:279.1px;font-size:14px;font-weight:normal;color:#707070;letter-spacing:0.89px;">(If the procedure code does not appear on this screen, please activate it in Setup-&gt;Offices-&gt;Office Assignment, on the</div>
<div class="t" style="left:765.8px;top:298.8px;font-size:14px;font-weight:normal;color:#707070;letter-spacing:0.00px;letter-spacing:0.89px">Procedures tab)</div>
<div class="t" style="left:227.5px;top:337.0px;font-size:14px;font-weight:bold;color:#111;letter-spacing:0.53px;">Fee Schedule Type</div>
<svg class="a" style="left:362px;top:339.5px" width="6" height="6" viewBox="0 0 6 6"><path d="M3 0.3V5.7M0.6 1.6L5.4 4.4M5.4 1.6L0.6 4.4" stroke="#ee1c25" stroke-width="1.3"/></svg>
<div class="a" style="left:448.1px;top:341px;width:13px;height:13px;border-radius:50%;border:1px solid #c4c4c4;background:#f2f2f2"></div>
<div class="t" style="left:469.9px;top:340.2px;font-size:14px;font-weight:bold;color:#2a2a2a;letter-spacing:0.67px;">Office</div>
<div class="a" style="left:531.0px;top:341px;width:13px;height:13px;border-radius:50%;border:1px solid #c4c4c4;background:#f2f2f2"></div>
<div class="t" style="left:553.8px;top:340.2px;font-size:14px;font-weight:bold;color:#2a2a2a;letter-spacing:0.56px;">Ins-Smart Fee</div>
<div class="a" style="left:670.8px;top:341px;width:13px;height:13px;border-radius:50%;border:1px solid #c4c4c4;background:#f2f2f2"></div>
<div class="t" style="left:693.8px;top:340.2px;font-size:14px;font-weight:bold;color:#2a2a2a;letter-spacing:0.68px;">Ins-Managed Care</div>
<div class="a" style="left:842.8px;top:341px;width:13px;height:13px;border-radius:50%;border:1px solid #c4c4c4;background:#f2f2f2"></div>
<div class="a" style="left:845.8px;top:344px;width:7px;height:7px;border-radius:50%;background:#b8b8b8"></div>
<div class="t" style="left:865.0px;top:340.2px;font-size:14px;font-weight:bold;color:#2a2a2a;letter-spacing:0.59px;">Ins-PPO</div>
<div class="a" style="left:940.5px;top:341px;width:13px;height:13px;border-radius:50%;border:1px solid #c4c4c4;background:#f2f2f2"></div>
<div class="t" style="left:963.0px;top:340.2px;font-size:14px;font-weight:bold;color:#2a2a2a;letter-spacing:0.54px;">Ins-Pat Co-pay</div>
<div class="t" style="left:1330.0px;top:337.0px;font-size:14px;font-weight:bold;color:#111;letter-spacing:0.53px;">Effective Date</div>
<svg class="a" style="left:1430.5px;top:339px" width="6" height="6" viewBox="0 0 6 6"><path d="M3 0.3V5.7M0.6 1.6L5.4 4.4M5.4 1.6L0.6 4.4" stroke="#ee1c25" stroke-width="1.3"/></svg>
<div class="a" style="left:1502px;top:332px;width:181px;height:28px;border:1px solid #d3d9e0;border-radius:4px;background:#eff2f5"></div>
<div class="t" style="left:1507.6px;top:338.8px;font-size:13.5px;font-weight:bold;color:#6e6e6e;letter-spacing:0.35px;">02/11/2021</div>
<div class="a" style="left:218px;top:387px;width:1470px;height:36px;background:#0070c6;border-radius:5px 5px 0 0"></div>
<div class="t" style="left:225.9px;top:397.6px;font-size:14px;font-weight:bold;color:#fff;letter-spacing:0.01px;">Code</div>
<div class="t" style="left:417.0px;top:397.6px;font-size:14px;font-weight:bold;color:#fff;letter-spacing:0.90px;">Description</div>
<div class="t" style="left:1463.6px;top:397.6px;font-size:14px;font-weight:bold;color:#fff;letter-spacing:0.65px;">Fee</div>
<div class="t" style="left:1505.0px;top:397.6px;font-size:14px;font-weight:bold;color:#fff;letter-spacing:0.61px;">AMB Code</div>
<div class="a" style="left:218px;top:423px;width:1470px;height:408px;background:#fff;border:2px solid #d3dce6;border-top:none;border-radius:0 0 6px 6px;overflow:hidden"><div class="a" style="left:0;top:8px;width:1466px;height:45px;background:#f5f9fd;border-top:1px solid #d3dce6"></div><div class="a" style="left:0;top:53px;width:1466px;height:45px;background:#fff;border-top:1px solid #d3dce6"></div><div class="a" style="left:0;top:98px;width:1466px;height:45px;background:#f5f9fd;border-top:1px solid #d3dce6"></div><div class="a" style="left:0;top:143px;width:1466px;height:45px;background:#fff;border-top:1px solid #d3dce6"></div><div class="a" style="left:0;top:188px;width:1466px;height:45px;background:#f5f9fd;border-top:1px solid #d3dce6"></div><div class="a" style="left:0;top:233px;width:1466px;height:45px;background:#fff;border-top:1px solid #d3dce6"></div><div class="a" style="left:0;top:278px;width:1466px;height:45px;background:#f5f9fd;border-top:1px solid #d3dce6"></div><div class="a" style="left:0;top:323px;width:1466px;height:45px;background:#fff;border-top:1px solid #d3dce6"></div><div class="a" style="left:0;top:368px;width:1466px;height:45px;background:#f5f9fd;border-top:1px solid #d3dce6"></div><div class="a" style="left:190px;top:0;width:1px;height:408px;background:#d3dce6"></div><div class="a" style="left:1085px;top:0;width:1px;height:408px;background:#d3dce6"></div><div class="a" style="left:1275px;top:0;width:1px;height:408px;background:#d3dce6"></div></div>
<div class="t" style="left:228.5px;top:445.9px;font-size:14px;font-weight:normal;color:#1a1a1a;letter-spacing:0.00px;letter-spacing:0.9px">D0274</div>
<div class="t" style="left:419.0px;top:445.9px;font-size:14px;font-weight:normal;color:#1a1a1a;letter-spacing:0.00px;letter-spacing:0.9px">Bitewings Four Films</div>
<div class="a" style="left:1314px;top:440px;width:173px;height:28px;border:1px solid #cfd6e2;border-radius:4px;background:#fff;"></div><div class="a" style="left:1504px;top:440px;width:174px;height:28px;border:1px solid #cfd6e2;border-radius:4px;background:#fff"></div>
<div class="t" style="right:425px;top:445.9px;font-size:14px;letter-spacing:0.6px;color:#1a1a1a">$50.00</div>
<div class="t" style="left:228.5px;top:490.9px;font-size:14px;font-weight:normal;color:#1a1a1a;letter-spacing:0.00px;letter-spacing:0.9px">D0277</div>
<div class="t" style="left:419.0px;top:490.9px;font-size:14px;font-weight:normal;color:#1a1a1a;letter-spacing:0.00px;letter-spacing:0.9px">Vertical Bitewings 7-8 Films</div>
<div class="a" style="left:1314px;top:485px;width:173px;height:28px;border:1px solid #cfd6e2;border-radius:4px;background:#fff;"></div><div class="a" style="left:1504px;top:485px;width:174px;height:28px;border:1px solid #cfd6e2;border-radius:4px;background:#fff"></div>
<div class="t" style="left:228.5px;top:535.9px;font-size:14px;font-weight:normal;color:#1a1a1a;letter-spacing:0.00px;letter-spacing:0.9px">D0290</div>
<div class="t" style="left:419.0px;top:535.9px;font-size:14px;font-weight:normal;color:#1a1a1a;letter-spacing:0.00px;letter-spacing:0.9px">Posterior-Anterior Survey Film</div>
<div class="a" style="left:1314px;top:530px;width:173px;height:28px;border:1px solid #cfd6e2;border-radius:4px;background:#fff;"></div><div class="a" style="left:1504px;top:530px;width:174px;height:28px;border:1px solid #cfd6e2;border-radius:4px;background:#fff"></div>
<div class="t" style="left:228.5px;top:580.9px;font-size:14px;font-weight:normal;color:#1a1a1a;letter-spacing:0.00px;letter-spacing:0.9px">D0310</div>
<div class="t" style="left:419.0px;top:580.9px;font-size:14px;font-weight:normal;color:#1a1a1a;letter-spacing:0.00px;letter-spacing:0.9px">Sialography</div>
<div class="a" style="left:1314px;top:575px;width:173px;height:28px;border:1px solid #66acec;border-radius:4px;background:#fff;box-shadow:0 0 3px rgba(102,172,236,.6);"></div><div class="a" style="left:1504px;top:575px;width:174px;height:28px;border:1px solid #cfd6e2;border-radius:4px;background:#fff"></div>
<div class="t" style="right:425px;top:580.9px;font-size:14px;letter-spacing:0.6px;color:#1a1a1a">250</div>
<div class="t" style="left:228.5px;top:625.9px;font-size:14px;font-weight:normal;color:#1a1a1a;letter-spacing:0.00px;letter-spacing:0.9px">D0320</div>
<div class="t" style="left:419.0px;top:625.9px;font-size:14px;font-weight:normal;color:#1a1a1a;letter-spacing:0.00px;letter-spacing:0.9px">Tmj Arthrogram W/Inj</div>
<div class="a" style="left:1314px;top:620px;width:173px;height:28px;border:1px solid #cfd6e2;border-radius:4px;background:#fff;"></div><div class="a" style="left:1504px;top:620px;width:174px;height:28px;border:1px solid #cfd6e2;border-radius:4px;background:#fff"></div>
<div class="t" style="left:228.5px;top:670.9px;font-size:14px;font-weight:normal;color:#1a1a1a;letter-spacing:0.00px;letter-spacing:0.9px">D0321</div>
<div class="t" style="left:419.0px;top:670.9px;font-size:14px;font-weight:normal;color:#1a1a1a;letter-spacing:0.00px;letter-spacing:0.9px">Other Tmj Films By Rp</div>
<div class="a" style="left:1314px;top:665px;width:173px;height:28px;border:1px solid #cfd6e2;border-radius:4px;background:#fff;"></div><div class="a" style="left:1504px;top:665px;width:174px;height:28px;border:1px solid #cfd6e2;border-radius:4px;background:#fff"></div>
<div class="t" style="left:228.5px;top:715.9px;font-size:14px;font-weight:normal;color:#1a1a1a;letter-spacing:0.00px;letter-spacing:0.9px">D0322</div>
<div class="t" style="left:419.0px;top:715.9px;font-size:14px;font-weight:normal;color:#1a1a1a;letter-spacing:0.00px;letter-spacing:0.9px">Temographic Survey</div>
<div class="a" style="left:1314px;top:710px;width:173px;height:28px;border:1px solid #cfd6e2;border-radius:4px;background:#fff;"></div><div class="a" style="left:1504px;top:710px;width:174px;height:28px;border:1px solid #cfd6e2;border-radius:4px;background:#fff"></div>
<div class="t" style="left:228.5px;top:760.9px;font-size:14px;font-weight:normal;color:#1a1a1a;letter-spacing:0.00px;letter-spacing:0.9px">D0330</div>
<div class="t" style="left:419.0px;top:760.9px;font-size:14px;font-weight:normal;color:#1a1a1a;letter-spacing:0.00px;letter-spacing:0.9px">Panoramic Film</div>
<div class="a" style="left:1314px;top:755px;width:173px;height:28px;border:1px solid #cfd6e2;border-radius:4px;background:#fff;"></div><div class="a" style="left:1504px;top:755px;width:174px;height:28px;border:1px solid #cfd6e2;border-radius:4px;background:#fff"></div>
<div class="t" style="right:425px;top:760.9px;font-size:14px;letter-spacing:0.6px;color:#1a1a1a">$85.00</div>
<div class="t" style="left:228.5px;top:805.9px;font-size:14px;font-weight:normal;color:#1a1a1a;letter-spacing:0.00px;letter-spacing:0.9px">d0330x</div>
<div class="t" style="left:419.0px;top:805.9px;font-size:14px;font-weight:normal;color:#1a1a1a;letter-spacing:0.00px;letter-spacing:0.9px">Panoramic Xray No Charge W. FMX</div>
<div class="a" style="left:1314px;top:800px;width:173px;height:28px;border:1px solid #cfd6e2;border-radius:4px;background:#fff;"></div><div class="a" style="left:1504px;top:800px;width:174px;height:28px;border:1px solid #cfd6e2;border-radius:4px;background:#fff"></div>
<div class="a" style="left:1479px;top:582px;width:1px;height:16px;background:#111"></div>
<div class="a" style="left:218px;top:562px;width:1279px;height:52px;border:6px solid #ff0000"></div>
<div class="a" style="left:218px;top:846px;width:1470px;height:37px;border:1px solid #d3dce6;border-radius:4px;background:#fff;overflow:hidden"><div class="a" style="left:209px;top:0;width:2px;height:37px;background:#d3dce6"></div><div class="a" style="left:629px;top:0;width:2px;height:37px;background:#d3dce6"></div><div class="a" style="left:1119px;top:0;width:2px;height:37px;background:#d3dce6"></div></div>
<div class="t" style="left:227.7px;top:857.3px;font-size:14px;font-weight:bold;color:#111;letter-spacing:0.57px;">Import from Excel File</div>
<div class="a" style="left:437px;top:850px;width:120px;height:29px;border:1px solid #c9d3df;border-radius:4px;background:#fff"></div>
<div class="t" style="left:449.0px;top:857.3px;font-size:14px;font-weight:bold;color:#2c86df;letter-spacing:0.37px;">UPLOAD FILE</div>
<div class="t" style="left:567.0px;top:857.3px;font-size:14px;font-weight:normal;color:#777;letter-spacing:0.95px;">No file chosen</div>
<div class="t" style="left:857.5px;top:857.2px;font-size:14px;font-weight:bold;color:#111;letter-spacing:0.52px;">Copy fees from existing fee schedule</div>
<div class="a" style="left:1347px;top:851px;width:331px;height:28px;border:1px solid #cfd6e2;border-radius:4px;background:#fff"></div>
<div class="t" style="left:1353.5px;top:855.6px;font-size:14px;font-weight:bold;color:#151515;letter-spacing:0.00px;letter-spacing:0.4px">None</div>
<svg class="a" style="left:1663px;top:861px" width="9" height="6" viewBox="0 0 9 6"><path d="M1 1L4.5 4.5L8 1" fill="none" stroke="#333" stroke-width="1.4"/></svg>
<div class="a" style="left:1509px;top:907px;width:77px;height:31px;border:6px solid #ff0000;background:#0070c6"></div>
<svg class="a" style="left:1520px;top:914px" width="14" height="14" viewBox="0 0 14 14"><path d="M1.5 1.5H10L12.5 4V12.5H1.5Z" fill="none" stroke="#fff" stroke-width="1.5"/><rect x="4" y="1.5" width="5" height="3.5" fill="none" stroke="#fff" stroke-width="1.2"/><rect x="3.8" y="8" width="6.4" height="4.5" fill="none" stroke="#fff" stroke-width="1.2"/></svg>
<div class="t" style="left:1536.5px;top:914.4px;font-size:14px;font-weight:bold;color:#fff;letter-spacing:0.13px;">SAVE</div>
<div class="a" style="left:1593px;top:909px;width:100px;height:25px;border-radius:5px;background:#6b7e92"></div>
<svg class="a" style="left:1603px;top:915px" width="12" height="12" viewBox="0 0 12 12"><path d="M2.5 2.5L9.5 9.5M9.5 2.5L2.5 9.5" stroke="#fff" stroke-width="3" stroke-linecap="round"/></svg>
<div class="t" style="left:1623.6px;top:914.6px;font-size:14px;font-weight:bold;color:#fff;letter-spacing:0.21px;">CANCEL</div>
<!--/MODAL-->

<div id="wl" class="a"></div><div id="wr" class="a"></div><div id="wb" class="a"></div>
</body></html>
